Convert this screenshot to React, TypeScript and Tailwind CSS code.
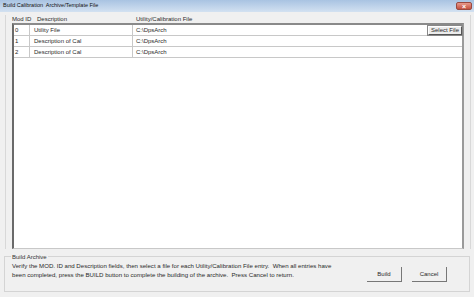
import React from "react";

const rows = [
  { id: "0", desc: "Utility File", file: "C:\\DpsArch" },
  { id: "1", desc: "Description of Cal", file: "C:\\DpsArch" },
  { id: "2", desc: "Description of Cal", file: "C:\\DpsArch" },
];

export default function App() {
  return (
    <div
      className="flex h-[297px] w-[474px] flex-col overflow-hidden bg-[#f0f0f0] text-[6px] leading-none text-[#2a2a2a]"
      style={{ fontFamily: '"Liberation Sans", Arial, sans-serif' }}
    >
      {/* title bar */}
      <div className="flex h-[12px] items-center justify-between bg-gradient-to-b from-[#a9c3e2] to-[#d3e1f1] pl-[3px] pr-[2px]">
        <span className="text-[5.5px] text-[#111]">Build Calibration&nbsp; Archive/Template File</span>
        <div className="flex h-[8px] w-[16px] items-center justify-center rounded-[2px] border border-[#9a4a40] bg-gradient-to-b from-[#e8998c] to-[#c4503f] text-[7px] font-bold text-white">
          ×
        </div>
      </div>

      {/* main group */}
      <div className="ml-[5px] mr-[3px] mt-[3px] flex h-[234px] flex-col border-l border-r border-[#d8d8d8] pl-[6px] pr-[6px]">
        <div className="flex h-[7px] items-center">
          <span className="w-[25px]">Mod ID</span>
          <span className="w-[99px]">Description</span>
          <span>Utility/Calibration File</span>
        </div>
        <div className="mt-[1px] flex-1 border-b border-l-2 border-r-2 border-t-2 border-b-[#c8c8c8] border-l-[#6a6a6a] border-r-[#9a9a9a] border-t-[#8a8a8a] bg-white">
          {rows.map((r, i) => (
            <div key={r.id} className="flex h-[11px] border-b border-[#c8c8c8]">
              <div className="flex w-[16px] items-center border-r border-[#c8c8c8] pl-[1px]">{r.id}</div>
              <div className="flex w-[103px] items-center border-r border-[#c8c8c8] pl-[4px]">{r.desc}</div>
              <div className="flex flex-1 items-center justify-between pl-[3px]">
                <span>{r.file}</span>
                {i === 0 ? (
                  <div className="flex h-[9px] items-center border border-b-[#555] border-l-[#fff] border-r-[#555] border-t-[#fff] bg-[#ececec] px-[2px] outline outline-1 outline-[#888]">
                    Select File
                  </div>
                ) : null}
              </div>
            </div>
          ))}
        </div>
      </div>

      {/* build archive group */}
      <div className="relative ml-[4px] mr-[4px] mt-[7px] flex h-[36px] items-start border border-[#d4d4d4] pl-[7px]">
        <span className="absolute left-[6px] top-[-3px] bg-[#f0f0f0] px-[1px] text-[#333]">Build Archive</span>
        <div className="mt-[6px] flex w-[350px] flex-col gap-[3px] text-[6.1px] leading-none">
          <span>
            Verify the MOD. ID and Description fields, then select a file for each Utility/Calibration File entry.&nbsp; When all entries have
          </span>
          <span>
            been completed, press the BUILD button to complete the building of the archive.&nbsp; Press Cancel to return.
          </span>
        </div>
        <div className="ml-[5px] mt-[10px] flex gap-[10px]">
          <div className="flex h-[15px] w-[35px] items-center justify-center border-b border-r border-b-[#777] border-r-[#777]">
            Build
          </div>
          <div className="flex h-[15px] w-[35px] items-center justify-center border-b border-r border-b-[#777] border-r-[#777]">
            Cancel
          </div>
        </div>
      </div>
    </div>
  );
}
